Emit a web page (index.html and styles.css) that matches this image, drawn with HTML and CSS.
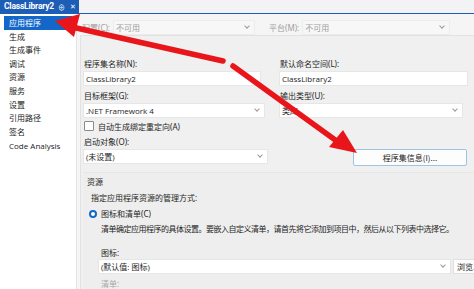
FILE: index.html
```html
<!DOCTYPE html>
<html lang="zh-CN">
<head>
    <meta charset="UTF-8">
    <title>ClassLibrary2</title>
    <link rel="stylesheet" href="styles.css">
</head>
<body>
    <!-- tab strip -->
    <div class="tabbar">
        <div class="tab">
            <span class="tab-title">ClassLibrary2</span>
            <span class="tab-pin">&#8853;</span>
            <span class="tab-close">&#10005;</span>
        </div>
    </div>

    <div class="window">
        <!-- left navigation -->
        <ul class="nav">
            <li class="active">应用程序</li>
            <li>生成</li>
            <li>生成事件</li>
            <li>调试</li>
            <li>资源</li>
            <li>服务</li>
            <li>设置</li>
            <li>引用路径</li>
            <li>签名</li>
            <li class="latin">Code Analysis</li>
        </ul>

        <div class="content">
            <!-- configuration bar -->
            <div class="toolbar">
                <span class="tb-label">配置(C):</span>
                <div class="select disabled w-config"><span>不可用</span><i class="chev"></i></div>
                <span class="tb-label tb-gap">平台(M):</span>
                <div class="select disabled w-platform"><span>不可用</span><i class="chev"></i></div>
            </div>

            <div class="page">
                <div class="grid">
                    <div class="field">
                        <label>程序集名称(N):</label>
                        <div class="input w-a">ClassLibrary2</div>
                    </div>
                    <div class="field">
                        <label>默认命名空间(L):</label>
                        <div class="input w-b">ClassLibrary2</div>
                    </div>
                    <div class="field">
                        <label>目标框架(G):</label>
                        <div class="select w-a2"><span>.NET Framework 4</span><i class="chev"></i></div>
                    </div>
                    <div class="field">
                        <label>输出类型(U):</label>
                        <div class="select w-b2"><span>类库</span><i class="chev"></i></div>
                    </div>
                </div>

                <div class="check-row">
                    <span class="checkbox"></span>
                    <span>自动生成绑定重定向(A)</span>
                </div>

                <div class="grid startup">
                    <div class="field">
                        <label>启动对象(O):</label>
                        <div class="select w-a3"><span>(未设置)</span><i class="chev"></i></div>
                    </div>
                    <div class="btn-cell">
                        <button class="btn">程序集信息(I)...</button>
                    </div>
                </div>

                <!-- resources group -->
                <div class="group">
                    <div class="group-title">资源</div>
                    <p class="hint">指定应用程序资源的管理方式:</p>
                    <div class="radio-row">
                        <span class="radio"></span>
                        <span>图标和清单(C)</span>
                    </div>
                    <p class="desc">清单确定应用程序的具体设置。要嵌入自定义清单，请首先将它添加到项目中，然后从以下列表中选择它。</p>
                    <label class="sub">图标:</label>
                    <div class="icon-row">
                        <div class="select w-icon"><span>(默认值: 图标)</span><i class="chev"></i></div>
                        <button class="btn browse">浏览...</button>
                    </div>
                    <label class="sub muted">清单:</label>
                </div>
            </div>
        </div>
    </div>

    <!-- annotation arrows drawn over the screenshot -->
    <svg class="arrows" width="474" height="289" viewBox="0 0 474 289">
        <line x1="223" y1="61" x2="72" y2="27" stroke="#e8161b" stroke-width="5.5" stroke-linecap="round"/>
        <polygon points="55,21 80,14 74,37" fill="#e8161b"/>
        <line x1="233" y1="66" x2="338" y2="142" stroke="#e8161b" stroke-width="5.5" stroke-linecap="round"/>
        <polygon points="357,153 329,147 343,130" fill="#e8161b"/>
    </svg>
</body>
</html>
```

FILE: styles.css
```css
/* base */
body {
    margin: 0;
    width: 474px;
    height: 289px;
    overflow: hidden;
    position: relative;
    font-family: "Noto Sans", "Noto Sans CJK SC", sans-serif;
    font-size: 8px;
    color: #1e1e1e;
    background: #f0f0f0;
}

/* tab strip */
.tabbar {
    height: 13px;
    background: #f3f3f5;
    border-bottom: 1px solid #1c5db5;
    display: flex;
}
.tab {
    width: 79px;
    background: #1c5db5;
    color: #fff;
    display: flex;
    align-items: center;
    padding-left: 4px;
    box-sizing: border-box;
}
.tab-title {
    font-family: Roboto, sans-serif;
    font-weight: 700;
    font-size: 8.5px;
    letter-spacing: -0.2px;
    line-height: 13px;
    flex: 1;
}
.tab-pin {
    font-size: 7px;
    margin-right: 5px;
}
.tab-close {
    font-size: 7px;
    margin-right: 3px;
}

.window {
    display: flex;
    height: 275px;
}

/* left navigation */
.nav {
    list-style: none;
    margin: 0;
    padding: 2px 4px 0 4px;
    width: 77px;
    flex: none;
    box-sizing: border-box;
    background: #fff;
    border-right: 1px solid #e3e3e3;
}
.nav li {
    height: 13.6px;
    line-height: 13.6px;
    padding-left: 5px;
    color: #222;
    white-space: nowrap;
}
.nav li.active {
    background: #1267c9;
    color: #fff;
}
.nav li.latin {
    font-family: "Open Sans", sans-serif;
    margin-top: 1px;
}

/* content */
.content {
    flex: 1;
    display: flex;
    flex-direction: column;
    background: #f5f5f5;
}
.toolbar {
    display: flex;
    align-items: flex-start;
    height: 18px;
    padding: 6px 0 0 5px;
    color: #a0a0a0;
}
.tb-label {
    margin-right: 3px;
    line-height: 15px;
}
.tb-gap {
    margin-left: 14px;
}

.page {
    flex: 1;
    margin-left: 3px;
    border-top: 1px solid #e2e2e2;
    border-left: 1px solid #e2e2e2;
    background: #f0f0f0;
    padding: 22px 0 0 2px;
}

.grid {
    display: grid;
    grid-template-columns: 196px 1fr;
    row-gap: 4px;
}
.field label {
    display: block;
    height: 12px;
    line-height: 12px;
    padding-left: 1px;
    margin-bottom: 1px;
}

.input,
.select {
    height: 13px;
    line-height: 13px;
    background: #fff;
    border: 1px solid #e6e6e6;
    padding-left: 2px;
    box-sizing: content-box;
    position: relative;
    white-space: nowrap;
    font-family: "Open Sans", "Noto Sans CJK SC", sans-serif;
    font-size: 8px;
}
.select.disabled {
    background: #f7f7f7;
    color: #a0a0a0;
    border-color: #ececec;
}
.chev {
    position: absolute;
    right: 5px;
    top: 3px;
    width: 3px;
    height: 3px;
    border-right: 1px solid #9a9a9a;
    border-bottom: 1px solid #9a9a9a;
    transform: rotate(45deg);
}

.w-config { width: 138px; }
.w-platform { width: 144px; }
.w-a { width: 174px; }
.w-b { width: 185px; }
.w-a2 { width: 178px; }
.w-b2 { width: 180px; }
.w-a3 { width: 181px; }
.w-icon { width: 349px; }

.check-row {
    display: flex;
    align-items: center;
    gap: 4px;
    height: 14px;
    margin-top: 1px;
    padding-left: 1px;
}
.checkbox {
    width: 8px;
    height: 8px;
    border: 1px solid #8a8a8a;
    border-radius: 1px;
    background: #fff;
}

.startup {
    margin-top: 3px;
}
.btn-cell {
    display: flex;
    align-items: flex-end;
    padding-left: 74px;
}
.btn {
    font-family: "Noto Sans CJK SC", sans-serif;
    font-size: 8px;
    color: #222;
    background: #fdfdfd;
    border: 1px solid #9fc3e6;
    border-radius: 2px;
    width: 114px;
    height: 17px;
    padding: 0;
    margin-bottom: -2px;
}

/* resources group */
.group {
    margin-top: 8px;
    border-top: 1px solid #e6e6e6;
    background: #eeeeee;
    padding: 3px 0 0 4px;
}
.group-title {
    height: 12px;
    line-height: 12px;
}
.hint {
    margin: 4px 0 0 4px;
    line-height: 12px;
}
.radio-row {
    display: flex;
    align-items: center;
    gap: 4px;
    margin: 3px 0 0 2px;
    height: 13px;
}
.radio {
    width: 4px;
    height: 4px;
    border: 2.5px solid #1267c9;
    border-radius: 50%;
    background: #fff;
}
.desc {
    margin: 3px 0 0 14px;
    line-height: 12px;
    white-space: nowrap;
    letter-spacing: -0.5px;
}
.sub {
    display: block;
    margin: 12px 0 0 14px;
    line-height: 12px;
}
.muted {
    color: #a8a8a8;
    margin-top: 4px;
}
.icon-row {
    display: flex;
    gap: 2px;
    margin: 0 0 0 11px;
}
.browse {
    width: 30px;
    height: 15px;
    border-color: #e0e0e0;
    border-radius: 0;
    margin: 0;
    text-align: left;
    padding-left: 3px;
}

/* annotation */
.arrows {
    position: absolute;
    left: 0;
    top: 0;
}
```
